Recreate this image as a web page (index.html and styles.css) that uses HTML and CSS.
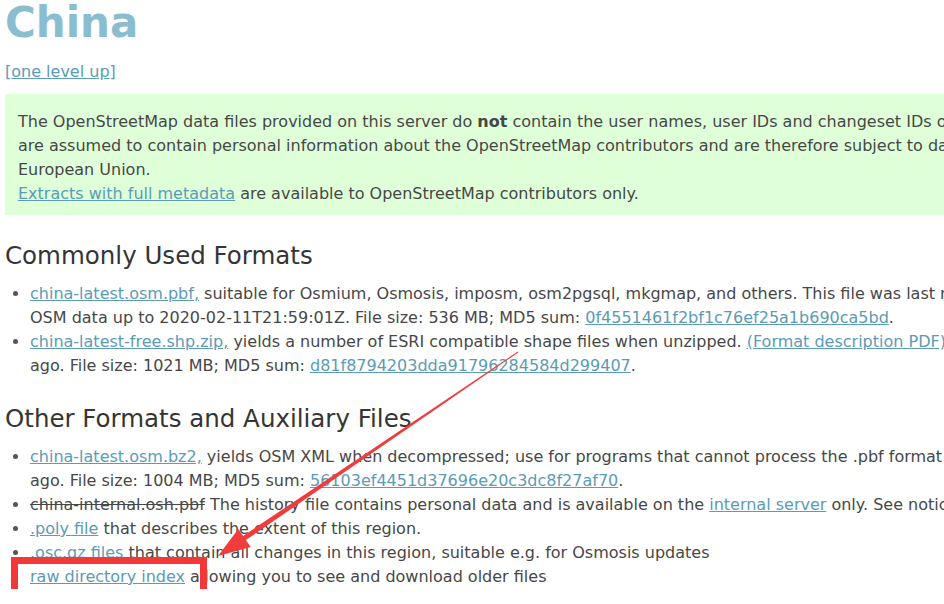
FILE: index.html
```html
<!DOCTYPE html>
<html lang="en">
<head>
<meta charset="utf-8">
<title>Geofabrik Download Server - China</title>
<link rel="stylesheet" href="styles.css">
</head>
<body>
<div class="page">
  <h1 class="title">China</h1>
  <p class="uplink">[<a href="#">one level up</a>]</p>

  <div class="notice">
    The OpenStreetMap data files provided on this server do <b>not</b> contain the user names, user IDs and changeset IDs of the OSM objects as these fields<br>
    are assumed to contain personal information about the OpenStreetMap contributors and are therefore subject to data protection regulations in the<br>
    European Union.<br>
    <a href="#">Extracts with full metadata</a> are available to OpenStreetMap contributors only.
  </div>

  <h2 class="section">Commonly Used Formats</h2>
  <ul class="files">
    <li><a href="#">china-latest.osm.pbf,</a> suitable for Osmium, Osmosis, imposm, osm2pgsql, mkgmap, and others. This file was last modified 1 day ago and contains all<br>OSM data up to 2020-02-11T21:59:01Z. File size: 536 MB; MD5 sum: <a href="#">0f4551461f2bf1c76ef25a1b690ca5bd</a>.</li>
    <li><a href="#">china-latest-free.shp.zip,</a> yields a number of ESRI compatible shape files when unzipped. <a href="#">(Format description PDF)</a> This file was last modified 1 day<br>ago. File size: 1021 MB; MD5 sum: <a href="#">d81f8794203dda91796284584d299407</a>.</li>
  </ul>

  <h2 class="section">Other Formats and Auxiliary Files</h2>
  <ul class="files">
    <li><a href="#">china-latest.osm.bz2,</a> yields OSM XML when decompressed; use for programs that cannot process the .pbf format. This file was last modified 1 day<br>ago. File size: 1004 MB; MD5 sum: <a href="#">56103ef4451d37696e20c3dc8f27af70</a>.</li>
    <li><s>china-internal.osh.pbf</s> The history file contains personal data and is available on the <a href="#">internal server</a> only. See notice above.</li>
    <li><a href="#">.poly file</a> that describes the extent of this region.</li>
    <li><a href="#">.osc.gz files</a> that contain all changes in this region, suitable e.g. for Osmosis updates</li>
    <li><a href="#">raw directory index</a> allowing you to see and download older files</li>
  </ul>

  <svg class="annotation" width="944" height="604" viewBox="0 0 944 604" aria-hidden="true">
    <polygon fill="#f03c3c" points="517.7,351.6 518.3,352.4 245.9,540.1 250.7,547.1 218,556 238.3,528.9 243.1,535.9"/>
    <rect x="14.5" y="560.5" width="189" height="34.5" fill="none" stroke="#f43838" stroke-width="7"/>
  </svg>
</div>
</body>
</html>
```

FILE: styles.css
```css
html, body {
  margin: 0;
  padding: 0;
  overflow: hidden;
  background: #fff;
}

body {
  font-family: "DejaVu Sans", Verdana, sans-serif;
  font-size: 16px;
  line-height: 24px;
  color: #474747;
}

a {
  color: #5b9bb6;
  text-decoration: underline;
}

.page {
  position: relative;
  width: 1500px;
  padding-left: 5px;
  white-space: nowrap;
}

.title {
  margin: 0;
  font-size: 42px;
  line-height: 46px;
  font-weight: bold;
  color: #8bbdd1;
}

.uplink {
  margin: 14px 0 0 0;
  color: #5b9bb6;
}

.notice {
  margin: 10px 0 1px 0;
  background: #dfffd9;
  padding: 16px 13px 9px 13px;
}

.section {
  margin: 25px 0 10px 0;
  font-size: 24.5px;
  line-height: 32px;
  font-weight: normal;
  color: #353535;
}

.files {
  margin: 0;
  padding-left: 25px;
}

.files li::marker {
  color: #555;
}

s {
  color: #474747;
}

.annotation {
  position: absolute;
  left: 0;
  top: 0;
  pointer-events: none;
}
```
